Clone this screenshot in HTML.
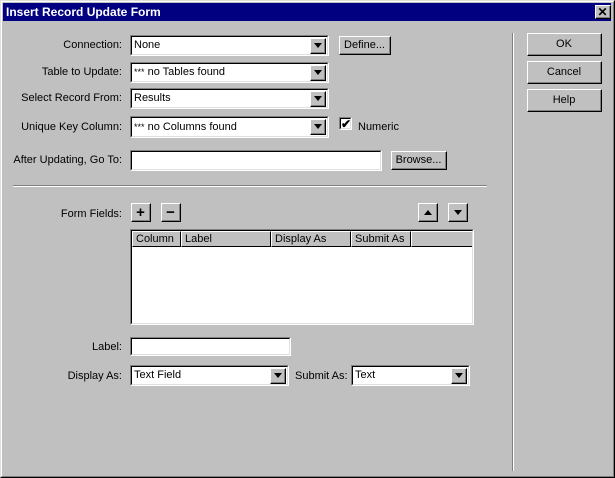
<!DOCTYPE html>
<html><head><style>
*{box-sizing:border-box;margin:0;padding:0}
body{width:615px;height:478px;background:#c0c0c0;font-family:"Liberation Sans",Arial,sans-serif;font-size:11px;color:#000;position:relative;overflow:hidden}
.win{position:absolute;left:0;top:0;width:615px;height:478px;border-top:1px solid #dfdfdf;border-left:1px solid #dfdfdf;border-right:1px solid #000;border-bottom:1px solid #000}
.win2{position:absolute;left:0;top:0;right:0;bottom:0;border-top:1px solid #fff;border-left:1px solid #fff;border-right:1px solid #808080;border-bottom:1px solid #808080}
.title{position:absolute;left:3px;top:3px;width:608px;height:18px;background:#000080;color:#fff;font-weight:bold;font-size:12px;line-height:18px;padding-left:3px}
.a{position:absolute}
.lbl{position:absolute;text-align:right;white-space:nowrap;line-height:13px}
.sunk{position:absolute;background:#fff;border-top:1px solid #808080;border-left:1px solid #808080;border-right:1px solid #fff;border-bottom:1px solid #fff}
.sunk>.in{position:absolute;left:0;top:0;right:0;bottom:0;border-top:1px solid #000;border-left:1px solid #000;border-right:1px solid #dfdfdf;border-bottom:1px solid #dfdfdf;padding-left:2px;line-height:17px;white-space:nowrap}
.btn{position:absolute;background:#c0c0c0;border-top:1px solid #fff;border-left:1px solid #fff;border-right:1px solid #000;border-bottom:1px solid #000;text-align:center}
.btn>.in{position:absolute;left:0;top:0;right:0;bottom:0;border-right:1px solid #808080;border-bottom:1px solid #808080;display:flex;align-items:center;justify-content:center;line-height:13px}
.tri{width:0;height:0;border-left:4px solid transparent;border-right:4px solid transparent;border-top:5px solid #000}
.triu{width:0;height:0;border-left:4px solid transparent;border-right:4px solid transparent;border-bottom:5px solid #000}
.hd{position:absolute;top:0;height:16px;background:#c0c0c0;border-top:1px solid #fff;border-left:1px solid #fff;border-right:1px solid #000;border-bottom:1px solid #000;padding-left:3px;line-height:14px;white-space:nowrap}
</style></head><body>
<div class="win"><div class="win2"></div></div>
<div class="title">Insert Record Update Form</div>
<div class="btn" style="left:595px;top:5px;width:16px;height:14px"><div class="in" style="font-weight:bold;font-size:12px;line-height:10px">✕</div></div>

<div class="lbl" style="right:493px;top:39px">Connection:</div>
<div class="lbl" style="right:493px;top:66px">Table to Update:</div>
<div class="lbl" style="right:493px;top:92px">Select Record From:</div>
<div class="lbl" style="right:493px;top:121px">Unique Key Column:</div>
<div class="lbl" style="right:493px;top:154px">After Updating, Go To:</div>

<div class="sunk" style="left:130px;top:35px;width:199px;height:21px"><div class="in">None</div><div class="btn" style="right:2px;top:2px;width:16px;height:16px;left:auto"><div class="in"><div class="tri"></div></div></div></div>
<div class="sunk" style="left:130px;top:62px;width:199px;height:21px"><div class="in"><span style="font-size:9px">***</span> no Tables found</div><div class="btn" style="right:2px;top:2px;width:16px;height:16px;left:auto"><div class="in"><div class="tri"></div></div></div></div>
<div class="sunk" style="left:130px;top:88px;width:199px;height:21px"><div class="in">Results</div><div class="btn" style="right:2px;top:2px;width:16px;height:16px;left:auto"><div class="in"><div class="tri"></div></div></div></div>
<div class="sunk" style="left:130px;top:116px;width:199px;height:22px"><div class="in" style="line-height:18px"><span style="font-size:9px">***</span> no Columns found</div><div class="btn" style="right:2px;top:2px;width:16px;height:16px;left:auto"><div class="in"><div class="tri"></div></div></div></div>

<div class="btn" style="left:339px;top:36px;width:52px;height:19px"><div class="in">Define...</div></div>
<div class="sunk" style="left:339px;top:117px;width:13px;height:13px"><div class="in" style="padding:0;font-size:12px;line-height:11px;text-align:center;font-weight:bold">✔</div></div>
<div class="lbl" style="left:358px;top:121px">Numeric</div>

<div class="sunk" style="left:130px;top:150px;width:252px;height:21px"><div class="in"></div></div>
<div class="btn" style="left:391px;top:151px;width:56px;height:19px"><div class="in">Browse...</div></div>

<div class="a" style="left:13px;top:185px;width:474px;height:2px;border-top:1px solid #808080;border-bottom:1px solid #fff"></div>
<div class="a" style="left:512px;top:33px;width:2px;height:438px;border-left:1px solid #808080;border-right:1px solid #fff"></div>

<div class="btn" style="left:527px;top:33px;width:75px;height:23px"><div class="in">OK</div></div>
<div class="btn" style="left:527px;top:61px;width:75px;height:23px"><div class="in">Cancel</div></div>
<div class="btn" style="left:527px;top:89px;width:75px;height:23px"><div class="in">Help</div></div>

<div class="lbl" style="right:493px;top:208px">Form Fields:</div>
<div class="btn" style="left:131px;top:203px;width:20px;height:19px"><div class="in" style="font-weight:bold;font-size:15px">+</div></div>
<div class="btn" style="left:161px;top:203px;width:20px;height:19px"><div class="in" style="font-weight:bold;font-size:15px">−</div></div>
<div class="btn" style="left:418px;top:203px;width:20px;height:19px"><div class="in"><div class="triu"></div></div></div>
<div class="btn" style="left:448px;top:203px;width:20px;height:19px"><div class="in"><div class="tri"></div></div></div>

<div class="sunk" style="left:130px;top:229px;width:344px;height:96px"><div class="in" style="padding:0;overflow:hidden">
<div class="hd" style="left:0;width:49px">Column</div>
<div class="hd" style="left:49px;width:90px">Label</div>
<div class="hd" style="left:139px;width:80px">Display As</div>
<div class="hd" style="left:219px;width:60px">Submit As</div>
<div class="hd" style="left:279px;width:70px"></div>
</div></div>

<div class="lbl" style="right:493px;top:341px">Label:</div>
<div class="sunk" style="left:130px;top:337px;width:161px;height:19px"><div class="in"></div></div>
<div class="lbl" style="right:493px;top:370px">Display As:</div>
<div class="sunk" style="left:130px;top:365px;width:159px;height:21px"><div class="in">Text Field</div><div class="btn" style="right:2px;top:2px;width:16px;height:16px;left:auto"><div class="in"><div class="tri"></div></div></div></div>
<div class="lbl" style="left:295px;top:370px">Submit As:</div>
<div class="sunk" style="left:351px;top:365px;width:119px;height:21px"><div class="in">Text</div><div class="btn" style="right:2px;top:2px;width:16px;height:16px;left:auto"><div class="in"><div class="tri"></div></div></div></div>
</body></html>
